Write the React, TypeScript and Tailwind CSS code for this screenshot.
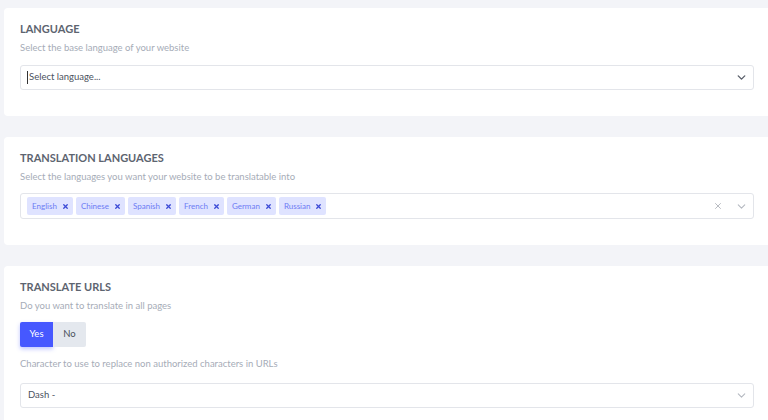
import { ChevronDown, X } from "lucide-react";

const languages = ["English", "Chinese", "Spanish", "French", "German", "Russian"];

const font = { fontFamily: "Lato, 'Noto Sans', sans-serif" };

function Card({ children }: { children: React.ReactNode }) {
  return <section className="rounded-l-[4px] bg-white pb-[26px] pl-4 pr-[14px] pt-[14px]">{children}</section>;
}

function Heading({ title, hint }: { title: string; hint: string }) {
  return (
    <>
      <h2 className="text-[11px] font-bold uppercase leading-[14px] text-[#5d6470]">{title}</h2>
      <p className="mt-[6px] text-[9.5px] leading-[12px] text-[#a6acb7]">{hint}</p>
    </>
  );
}

export default function App() {
  return (
    <div className="min-h-screen bg-[#f3f4f8] pl-1 pt-2" style={font}>
      <div className="flex flex-col gap-[21px]">
        <Card>
          <Heading title="Language" hint="Select the base language of your website" />
          <div className="mt-[11px] flex h-[25px] items-center rounded-[3px] border border-[#e3e5ea] bg-white pl-[6px] pr-[5px]">
            <span className="mr-[1px] h-[13px] w-px bg-[#333]" />
            <span className="flex-1 text-[9.5px] text-[#4b5260]">Select language...</span>
            <ChevronDown className="h-[13px] w-[13px] text-[#5b606b]" strokeWidth={2.6} />
          </div>
        </Card>

        <Card>
          <Heading title="Translation Languages" hint="Select the languages you want your website to be translatable into" />
          <div className="mt-[10px] flex h-[26px] items-center rounded-[3px] border border-[#e3e5ea] bg-white pl-[6px] pr-[5px]">
            <div className="flex flex-1 gap-[3px]">
              {languages.map((lang) => (
                <span
                  key={lang}
                  className="flex h-[18px] items-center gap-[5px] rounded-[2px] bg-[#dfe3ff] pl-[5px] pr-[4px] text-[8px] text-[#6d7cf4]"
                >
                  {lang}
                  <X className="h-[7px] w-[7px] text-[#3b4ad6]" strokeWidth={4.5} />
                </span>
              ))}
            </div>
            <X className="mr-[12px] h-[10px] w-[10px] text-[#a9adb5]" strokeWidth={2} />
            <ChevronDown className="h-[13px] w-[13px] text-[#b5b9c1]" strokeWidth={2} />
          </div>
        </Card>

        <Card>
          <Heading title="Translate URLs" hint="Do you want to translate in all pages" />
          <div className="mt-[10px] flex h-[25px] w-[66px] text-[9.5px]">
            <button
              type="button"
              className="flex-1 rounded-l-[2px] bg-[#4658ff] text-white shadow-[0_2px_4px_rgba(70,88,255,0.35)]"
            >
              Yes
            </button>
            <button type="button" className="flex-1 rounded-r-[2px] bg-[#e4e8ee] text-[#4a505c]">
              No
            </button>
          </div>
          <p className="mt-[11px] text-[9.5px] leading-[12px] text-[#a6acb7]">
            Character to use to replace non authorized characters in URLs
          </p>
          <div className="mt-[13px] flex h-[25px] items-center rounded-[3px] border border-[#e3e5ea] bg-white pl-[7px] pr-[5px]">
            <span className="flex-1 text-[9.5px] text-[#4b5260]">Dash -</span>
            <ChevronDown className="h-[13px] w-[13px] text-[#b5b9c1]" strokeWidth={2} />
          </div>
        </Card>
      </div>
    </div>
  );
}
